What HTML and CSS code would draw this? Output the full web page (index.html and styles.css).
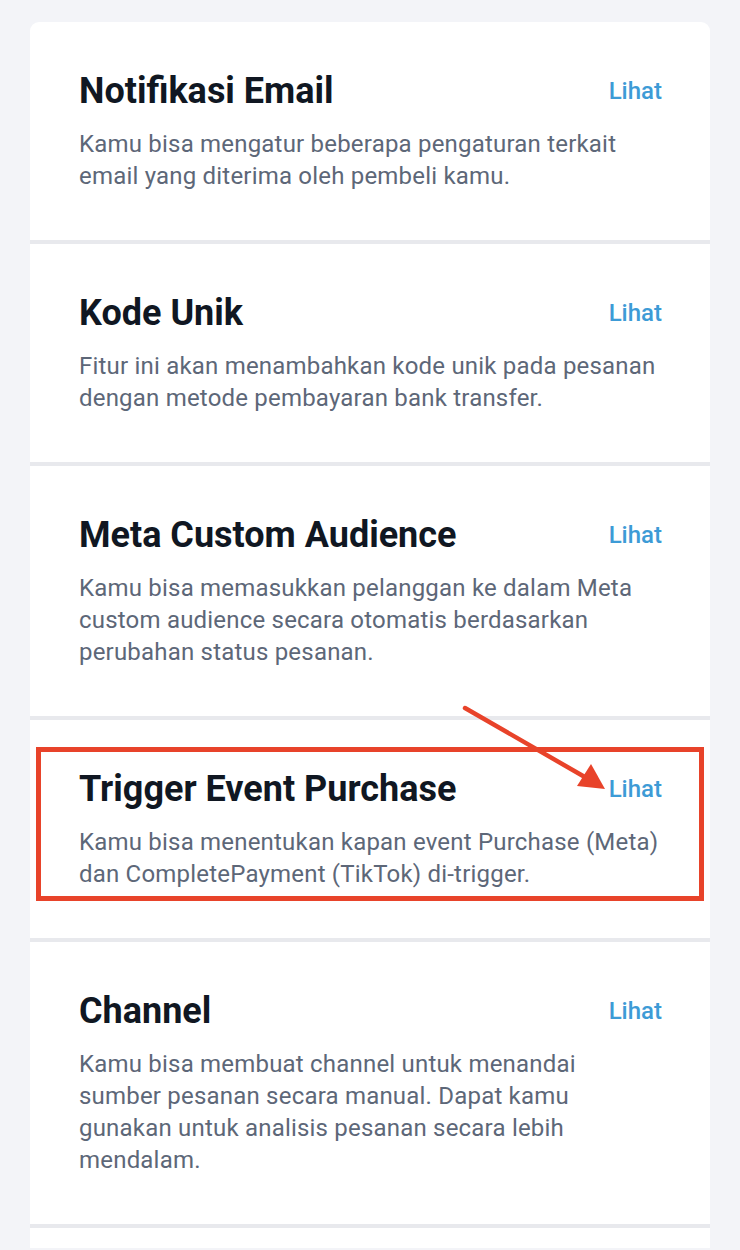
FILE: index.html
```html
<!DOCTYPE html>
<html lang="id">
<head>
<meta charset="utf-8">
<title>Pengaturan</title>
<link rel="stylesheet" href="styles.css">
</head>
<body>
<main class="page">
  <div class="card">
    <section class="item">
      <div class="item-head">
        <h2 class="item-title">Notifikasi Email</h2>
        <a class="item-link" href="#">Lihat</a>
      </div>
      <p class="item-desc">Kamu bisa mengatur beberapa pengaturan terkait email yang diterima oleh pembeli kamu.</p>
    </section>
    <section class="item">
      <div class="item-head">
        <h2 class="item-title">Kode Unik</h2>
        <a class="item-link" href="#">Lihat</a>
      </div>
      <p class="item-desc">Fitur ini akan menambahkan kode unik pada pesanan dengan metode pembayaran bank transfer.</p>
    </section>
    <section class="item">
      <div class="item-head">
        <h2 class="item-title">Meta Custom Audience</h2>
        <a class="item-link" href="#">Lihat</a>
      </div>
      <p class="item-desc">Kamu bisa memasukkan pelanggan ke dalam Meta custom audience secara otomatis berdasarkan perubahan status pesanan.</p>
    </section>
    <section class="item">
      <div class="item-head">
        <h2 class="item-title">Trigger Event Purchase</h2>
        <a class="item-link" href="#">Lihat</a>
      </div>
      <p class="item-desc">Kamu bisa menentukan kapan event Purchase (Meta) dan CompletePayment (TikTok) di-trigger.</p>
    </section>
    <section class="item">
      <div class="item-head">
        <h2 class="item-title">Channel</h2>
        <a class="item-link" href="#">Lihat</a>
      </div>
      <p class="item-desc">Kamu bisa membuat channel untuk menandai sumber pesanan secara manual. Dapat kamu gunakan untuk analisis pesanan secara lebih mendalam.</p>
    </section>
    <div class="item item-rest"></div>

    <svg class="annotation" width="680" height="900" viewBox="0 0 680 900" aria-hidden="true">
      <rect x="8.5" y="727.5" width="663" height="149" fill="none" stroke="#e8432a" stroke-width="5"/>
      <line x1="435" y1="686" x2="560" y2="758" stroke="#e8432a" stroke-width="4.5" stroke-linecap="round"/>
      <polygon points="575,767 547,764 561,742" fill="#e8432a"/>
    </svg>
  </div>
</main>
</body>
</html>
```

FILE: styles.css
```css
html, body {
  margin: 0;
  padding: 0;
  overflow: hidden;
}

body {
  background: #f3f4f8;
  font-family: Roboto, "Liberation Sans", Arial, sans-serif;
}

.page {
  padding: 22px 30px 0;
}

.card {
  position: relative;
  background: #ffffff;
  border-radius: 9px 9px 0 0;
  display: flex;
  flex-direction: column;
}

.item {
  padding: 48px 48px 48px 49px;
}

.item + .item {
  border-top: 4px solid #e8e9ed;
}

.item-head {
  display: flex;
  align-items: center;
  justify-content: space-between;
  gap: 20px;
}

.item-title {
  margin: 0;
  font-size: 36px;
  line-height: 42px;
  font-weight: 700;
  color: #101722;
}

.item-link {
  font-size: 24px;
  font-weight: 500;
  color: #3d9bd6;
  text-decoration: none;
  line-height: 42px;
}

.item-desc {
  margin: 16px 0 0;
  font-size: 24px;
  line-height: 32px;
  letter-spacing: 0.2px;
  color: #5d6778;
}

.item-rest {
  height: 20px;
  padding: 0;
}

.annotation {
  position: absolute;
  left: 0;
  top: 0;
  pointer-events: none;
}
```
